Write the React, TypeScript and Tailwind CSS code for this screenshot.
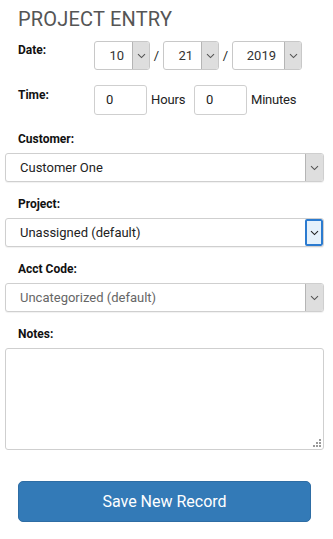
import React from 'react';

const Chevron = ({ color = '#555' }: { color?: string }) => (
  <svg width="9" height="6" viewBox="0 0 9 6" fill="none">
    <path d="M1 1.2 L4.5 4.6 L8 1.2" stroke={color} strokeWidth="1.1" />
  </svg>
);

const MiniSelect = ({ value, width }: { value: string; width: string }) => (
  <div className={`flex h-[29px] ${width} border border-[#c8c8c8] rounded-[3px] overflow-hidden bg-white`}>
    <div className="flex-1 flex items-center justify-end pr-[8px] text-[13px] text-[#333]">{value}</div>
    <div className="w-[17px] flex items-center justify-center bg-[#dedede] border-l border-[#b5b5b5]">
      <Chevron />
    </div>
  </div>
);

const WideSelect = ({
  value,
  focused,
  muted,
}: {
  value: string;
  focused?: boolean;
  muted?: boolean;
}) => (
  <div className="flex h-[29px] border border-[#cfcfcf] rounded-[3px] overflow-hidden bg-white shadow-[0_1px_1px_rgba(0,0,0,0.06)]">
    <div className={`flex-1 flex items-center pl-[14px] text-[13px] ${muted ? 'text-[#666]' : 'text-[#222]'}`}>
      {value}
    </div>
    {focused ? (
      <div className="w-[18px] flex items-center justify-center bg-[#e5f1fb] border-2 border-[#2b7bd0] rounded-[2px]">
        <Chevron color="#222" />
      </div>
    ) : (
      <div className="w-[18px] flex items-center justify-center bg-[#dedede] border-l border-[#b5b5b5]">
        <Chevron />
      </div>
    )}
  </div>
);

const Label = ({ children }: { children: React.ReactNode }) => (
  <div className="pl-[13px] text-[12px] font-bold text-[#111] leading-[14px]">{children}</div>
);

export default function App() {
  return (
    <div className="w-[333px] h-[539px] bg-white font-['Roboto',sans-serif] pl-[5px] pr-[9px]">
      <div className="pl-[13px] pt-[7px] text-[20px] leading-[24px] text-[#555] tracking-[0.2px]">PROJECT ENTRY</div>

      <div className="flex mt-[10px] pl-[13px]">
        <div className="w-[76px] pt-[2px] text-[12px] font-bold text-[#111] leading-[14px]">Date:</div>
        <div className="flex items-center">
          <MiniSelect value="10" width="w-[56px]" />
          <span className="w-[13px] text-center text-[13px] text-[#222]">/</span>
          <MiniSelect value="21" width="w-[56px]" />
          <span className="w-[13px] text-center text-[13px] text-[#222]">/</span>
          <MiniSelect value="2019" width="w-[70px]" />
        </div>
      </div>

      <div className="flex mt-[15px] pl-[13px]">
        <div className="w-[76px] pt-[3px] text-[12px] font-bold text-[#111] leading-[14px]">Time:</div>
        <div className="flex items-center text-[13px] text-[#222]">
          <div className="w-[53px] h-[30px] border border-[#cfcfcf] rounded-[3px] flex items-center pl-[11px]">0</div>
          <span className="ml-[4px] w-[43px] tracking-[-0.1px]">Hours</span>
          <div className="w-[53px] h-[30px] border border-[#cfcfcf] rounded-[3px] flex items-center pl-[11px]">0</div>
          <span className="ml-[4px] tracking-[-0.2px]">Minutes</span>
        </div>
      </div>

      <div className="mt-[17px]">
        <Label>Customer:</Label>
        <div className="mt-[7px]">
          <WideSelect value="Customer One" />
        </div>
      </div>

      <div className="mt-[15px]">
        <Label>Project:</Label>
        <div className="mt-[7px]">
          <WideSelect value="Unassigned (default)" focused />
        </div>
      </div>

      <div className="mt-[15px]">
        <Label>Acct Code:</Label>
        <div className="mt-[7px]">
          <WideSelect value="Uncategorized (default)" muted />
        </div>
      </div>

      <div className="mt-[15px]">
        <Label>Notes:</Label>
        <div className="mt-[7px] relative h-[102px] border border-[#cfcfcf] rounded-[3px] bg-white">
          <svg className="absolute right-[2px] bottom-[2px]" width="8" height="8" viewBox="0 0 8 8">
            <rect x="6" y="0" width="2" height="2" fill="#999" />
            <rect x="3" y="3" width="2" height="2" fill="#999" />
            <rect x="6" y="3" width="2" height="2" fill="#999" />
            <rect x="0" y="6" width="2" height="2" fill="#999" />
            <rect x="3" y="6" width="2" height="2" fill="#999" />
            <rect x="6" y="6" width="2" height="2" fill="#999" />
          </svg>
        </div>
      </div>

      <div className="mt-[31px] pl-[13px]">
        <button className="w-[293px] h-[41px] bg-[#337ab7] border border-[#2e6da4] rounded-[5px] text-white text-[16px]">
          Save New Record
        </button>
      </div>
    </div>
  );
}
